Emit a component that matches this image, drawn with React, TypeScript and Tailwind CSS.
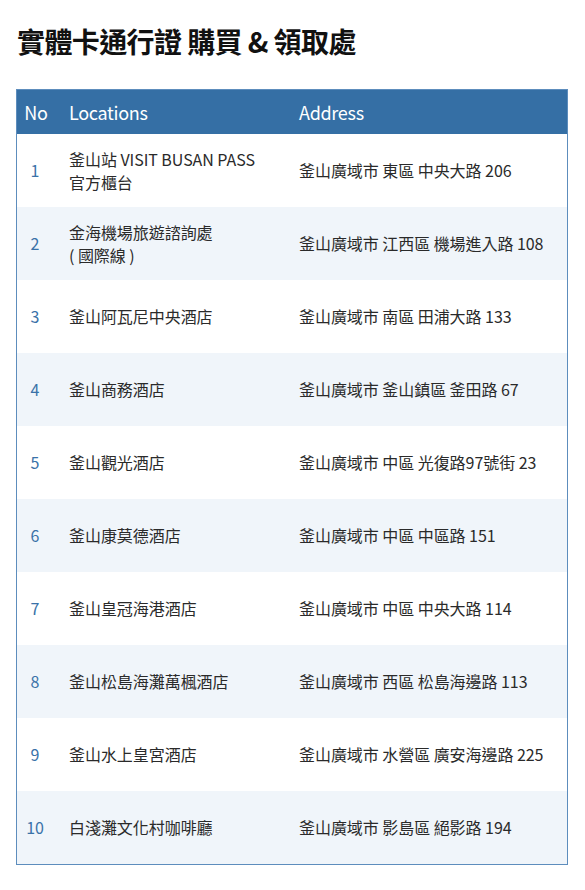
const rows = [
  { no: 1, loc: ['釜山站 VISIT BUSAN PASS', '官方櫃台'], addr: '釜山廣域市 東區 中央大路 206' },
  { no: 2, loc: ['金海機場旅遊諮詢處', '( 國際線 )'], addr: '釜山廣域市 江西區 機場進入路 108' },
  { no: 3, loc: ['釜山阿瓦尼中央酒店'], addr: '釜山廣域市 南區 田浦大路 133' },
  { no: 4, loc: ['釜山商務酒店'], addr: '釜山廣域市 釜山鎮區 釜田路 67' },
  { no: 5, loc: ['釜山觀光酒店'], addr: '釜山廣域市 中區 光復路97號街 23' },
  { no: 6, loc: ['釜山康莫德酒店'], addr: '釜山廣域市 中區 中區路 151' },
  { no: 7, loc: ['釜山皇冠海港酒店'], addr: '釜山廣域市 中區 中央大路 114' },
  { no: 8, loc: ['釜山松島海灘萬楓酒店'], addr: '釜山廣域市 西區 松島海邊路 113' },
  { no: 9, loc: ['釜山水上皇宮酒店'], addr: '釜山廣域市 水營區 廣安海邊路 225' },
  { no: 10, loc: ['白淺灘文化村咖啡廳'], addr: '釜山廣域市 影島區 絕影路 194' },
]

const App = () => {
  return (
    <div className="w-[585px] min-h-[890px] bg-white font-['Noto_Sans_CJK_TC','Noto_Sans',sans-serif] text-[#2a2a2a]">
      <h1 className="pt-[21px] pl-[17px] text-[28px] leading-[40px] font-bold text-[#111] tracking-[-0.6px]">
        實體卡通行證 購買 &amp; 領取處
      </h1>
      <div className="mt-[28px] ml-[16px] w-[552px] border border-[#5d8dbd]">
        <div className="flex items-center h-[44px] bg-[#356fa5] text-white text-[18px] tracking-[-0.3px]">
          <div className="w-[38px] text-center">No</div>
          <div className="ml-[14px] w-[230px]">Locations</div>
          <div>Address</div>
        </div>
        {rows.map((r, i) => (
          <div
            key={r.no}
            className={`flex items-center h-[73px] text-[16px] leading-[23px] tracking-[-0.05px] ${i % 2 === 1 ? 'bg-[#f0f5fa]' : 'bg-white'}`}
          >
            <div className="w-[36px] text-center text-[#3a72a8]">{r.no}</div>
            <div className="ml-[16px] w-[230px]">
              {r.loc.map((l) => (
                <div key={l}>{l}</div>
              ))}
            </div>
            <div>{r.addr}</div>
          </div>
        ))}
      </div>
    </div>
  )
}

export default App
